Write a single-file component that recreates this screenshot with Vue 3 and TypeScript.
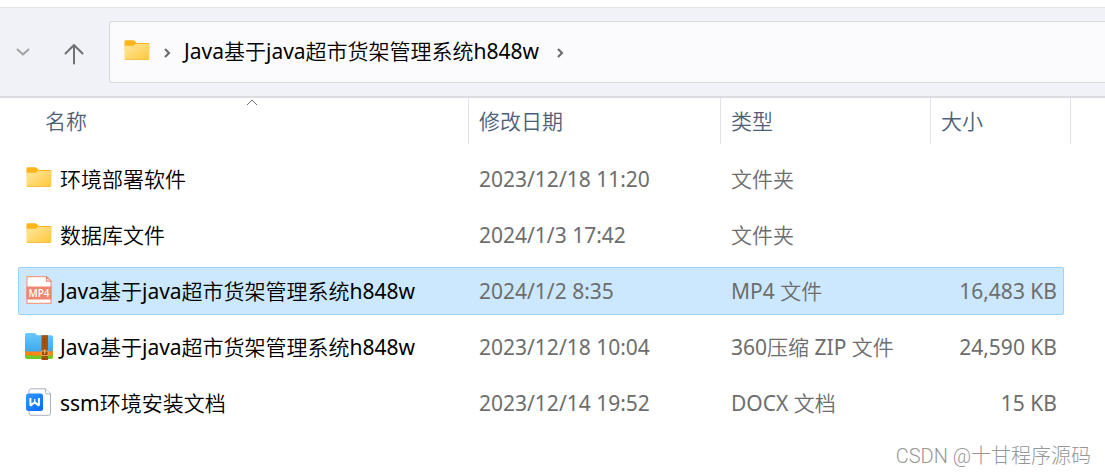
<script setup lang="ts">
import { ref } from 'vue'

type Kind = 'folder' | 'mp4' | 'zip' | 'docx'

interface Entry {
  id: number
  kind: Kind
  name: string
  modified: string
  type: string
  size: string
}

const folderName = 'Java基于java超市货架管理系统h848w'

const columns: string[] = ['名称', '修改日期', '类型', '大小']

const entries: Entry[] = [
  { id: 1, kind: 'folder', name: '环境部署软件', modified: '2023/12/18 11:20', type: '文件夹', size: '' },
  { id: 2, kind: 'folder', name: '数据库文件', modified: '2024/1/3 17:42', type: '文件夹', size: '' },
  { id: 3, kind: 'mp4', name: folderName, modified: '2024/1/2 8:35', type: 'MP4 文件', size: '16,483 KB' },
  { id: 4, kind: 'zip', name: folderName, modified: '2023/12/18 10:04', type: '360压缩 ZIP 文件', size: '24,590 KB' },
  { id: 5, kind: 'docx', name: 'ssm环境安装文档', modified: '2023/12/14 19:52', type: 'DOCX 文档', size: '15 KB' },
]

const selected = ref<number>(3)
</script>

<template>
  <div class="explorer">
    <svg class="defs" width="0" height="0" aria-hidden="true">
      <defs>
        <linearGradient id="folderFront" x1="0" y1="0" x2="1" y2="1">
          <stop offset="0" stop-color="#ffe7a0" />
          <stop offset="1" stop-color="#ffc83a" />
        </linearGradient>
        <linearGradient id="zipBlue" x1="0" y1="0" x2="0" y2="1">
          <stop offset="0" stop-color="#6bc7fb" />
          <stop offset="1" stop-color="#3fa9f0" />
        </linearGradient>
        <linearGradient id="docBlue" x1="0" y1="0" x2="1" y2="1">
          <stop offset="0" stop-color="#2f9bff" />
          <stop offset="1" stop-color="#0a66ff" />
        </linearGradient>
        <symbol id="icon-folder" viewBox="0 0 28 28">
          <path d="M1.500 5.500a1.300 1.300 0 0 1 1.300-1.300h7.600c.5 0 .9.200 1.200.5L13.700 7h11.300a1.300 1.300 0 0 1 1.300 1.300V14H1.500z" fill="#fbb41a" />
          <path d="M1.500 9.800h8.600c.5 0 .9-.2 1.200-.5l1-1c.3-.3.600-.4 1-.4H25a1.300 1.300 0 0 1 1.300 1.300v13.500A1.300 1.300 0 0 1 25 24H2.800a1.300 1.300 0 0 1-1.300-1.300z" fill="url(#folderFront)" />
          <path d="M1.700 23.200q.4.800 1.100.8H25q.8 0 1.100-.8z" fill="#f6b93b" />
        </symbol>
      </defs>
    </svg>

    <header class="toolbar">
      <button class="nav recent" type="button" aria-label="最近浏览的位置">
        <svg width="14" height="8" viewBox="0 0 14 8" fill="none" stroke="#a0a1a5" stroke-width="2">
          <path d="M1 1l6 5.500L13 1" />
        </svg>
      </button>
      <button class="nav up" type="button" aria-label="上移">
        <svg width="20" height="22" viewBox="0 0 20 22" fill="none" stroke="#707174" stroke-width="2" stroke-linecap="round" stroke-linejoin="round">
          <path d="M10 20.500V2M1.500 10.500L10 2l8.500 8.500" />
        </svg>
      </button>
      <nav class="address" aria-label="地址栏">
        <svg class="icon" aria-hidden="true"><use href="#icon-folder" /></svg>
        <svg class="chevron" viewBox="0 0 8 10" aria-hidden="true"><path d="M2 1l4 4-4 4" /></svg>
        <a class="crumb" href="#">{{ folderName }}</a>
        <svg class="chevron" viewBox="0 0 8 10" aria-hidden="true"><path d="M2 1l4 4-4 4" /></svg>
      </nav>
    </header>

    <main>
      <table>
        <thead>
          <tr>
            <th v-for="(column, i) in columns" :key="column" scope="col">
              <svg v-if="i === 0" class="sort" viewBox="0 0 12 7" aria-hidden="true"><path d="M1 6l5-5 5 5" /></svg>
              <button type="button">{{ column }}</button>
            </th>
          </tr>
        </thead>
        <tbody>
          <tr v-for="entry in entries" :key="entry.id" :class="{ selected: entry.id === selected }" @click="selected = entry.id">
            <td class="name">
              <svg v-if="entry.kind === 'folder'" class="icon folder" aria-hidden="true"><use href="#icon-folder" /></svg>
              <svg v-else-if="entry.kind === 'mp4'" class="icon" viewBox="0 0 28 28" aria-hidden="true">
                <path d="M2 .7h19.500L26 5.200v22.100H2z" fill="#fff" stroke="#f29c8a" stroke-width="1.200" />
                <path d="M21.500.7v4.500H26z" fill="#fff" stroke="#f08975" stroke-width="1.200" />
                <path d="M1.400 10.500h25.200v13H1.400z" fill="#f08571" />
                <text class="badge" x="14" y="20.500" text-anchor="middle">MP4</text>
              </svg>
              <svg v-else-if="entry.kind === 'zip'" class="icon" viewBox="0 0 28 28" aria-hidden="true">
                <path d="M0 20h28v4.500q0 2.500-2.500 2.500h-23Q0 27 0 24.500z" fill="#72c729" />
                <path d="M0 17h28v4q0 2.500-2.500 2.500h-23Q0 23.500 0 21z" fill="#ff8517" />
                <path d="M0 3Q0 1 2 1h7q1 0 1.700.8L12 3.200h14q2 0 2 2v12.300q0 2-2 2H2q-2 0-2-2z" fill="url(#zipBlue)" />
                <path d="M16.500 3.200h6.500V28h-6.500z" fill="#a95109" />
                <path d="M19 7h1v1h-1zM19 10h1v1h-1zM19 13h1v1h-1zM19 26h1v1h-1z" fill="#6c310b" />
                <path d="M16.500 19h6.500v4.500h-6.500z" fill="#9a4708" stroke="#eebd79" stroke-width=".8" />
                <path d="M19.700 17.500v4.500" fill="none" stroke="#f7cf8c" />
              </svg>
              <svg v-else class="icon" viewBox="0 0 28 28" aria-hidden="true">
                <path d="M6 .8h14.500L25.500 5.800v19.500q0 2-2 2H6q-2 0-2-2V2.800q0-2 2-2z" fill="#fdfeff" stroke="#aab0be" />
                <path d="M20.500.8v3.500q0 1.500 1.500 1.500h3.500" fill="#fff" stroke="#aab0be" />
                <rect x="1" y="5.500" width="17" height="17.500" rx="2.500" fill="url(#docBlue)" />
                <path d="M5.400 10v7.600l4.300-3.400 4.200 3.400V10" fill="none" stroke="#fff" stroke-width="2" stroke-linejoin="bevel" />
                <path d="M9.700 11v3.500" stroke="#fff" stroke-width="1.300" />
              </svg>
              <span>{{ entry.name }}</span>
            </td>
            <td>{{ entry.modified }}</td>
            <td>{{ entry.type }}</td>
            <td class="size">{{ entry.size }}</td>
          </tr>
        </tbody>
      </table>
    </main>

    <p class="watermark">CSDN @十甘程序源码</p>
  </div>
</template>

<style>
body {
  margin: 0;
  background: #fff;
}
</style>

<style scoped>
.explorer {
  position: relative;
  min-height: 100vh;
  box-sizing: border-box;
  padding-top: 7px;
  overflow: hidden;
  font-family: "Noto Sans", "Noto Sans CJK SC DemiLight", "Noto Sans CJK SC Light", "Noto Sans CJK SC", sans-serif;
  font-size: 21px;
  line-height: 30px;
  color: #000;
}

.defs {
  position: absolute;
}

button {
  padding: 0;
  border: 0;
  background: none;
  font: inherit;
  color: inherit;
}

.toolbar {
  display: flex;
  align-items: center;
  padding: 13px 0 13px 16px;
  border-top: 1px solid #e4e4e8;
  border-bottom: 2px solid #dbdbe0;
  background: #f1f2f8;
}

.nav {
  display: flex;
  flex: none;
}

.up {
  margin: 4px 25px 0 34px;
}

.address {
  display: flex;
  flex: 1;
  align-items: center;
  height: 60px;
  min-width: 0;
  padding-left: 13px;
  border: 1px solid #d7d8dd;
  border-right: 0;
  border-radius: 4px 0 0 4px;
  background: #fbfbfd;
}

.icon {
  flex: none;
  width: 28px;
  height: 28px;
}

.address .icon {
  margin-bottom: 4px;
}

.chevron {
  flex: none;
  width: 8px;
  height: 10px;
  margin: 2px 12px 0;
  fill: none;
  stroke: #66676a;
  stroke-width: 2;
}

.crumb {
  padding: 0 5px 2px 1px;
  color: inherit;
  text-decoration: none;
  white-space: nowrap;
}

main {
  padding: 0 41px 0 18px;
}

table,
thead,
tbody {
  display: block;
}

tr {
  display: grid;
  box-sizing: border-box;
}

thead tr {
  grid-template-columns: minmax(0, 1fr) 252px 210px 141px;
  height: 46px;
  margin-right: -7px;
}

th {
  position: relative;
  display: flex;
  align-items: center;
  padding: 0 0 0 10px;
  border-left: 1px solid #e2e2e4;
  font-weight: 400;
  color: #4c607a;
}

th:first-child {
  padding-left: 27px;
  border-left: 0;
}

th:last-child {
  border-right: 1px solid #e2e2e4;
}

.sort {
  position: absolute;
  top: 1px;
  left: calc(50% + 3px);
  width: 12px;
  height: 7px;
  fill: none;
  stroke: #707173;
}

tbody {
  display: grid;
  gap: 8px;
  padding-top: 11px;
}

tbody tr {
  grid-template-columns: minmax(0, 1fr) 252px 210px 133px;
  height: 48px;
  border: 1px solid transparent;
  border-radius: 2px;
}

tbody tr.selected {
  border-color: #99d1ff;
  background: #cce8ff;
}

td {
  display: flex;
  align-items: center;
  padding: 0 6px 0 11px;
  white-space: nowrap;
  color: #6d6d6d;
}

.name {
  gap: 7px;
  padding-left: 6px;
  color: #000;
}

.name .icon {
  margin-bottom: 2px;
}

.name .folder {
  margin-bottom: 4px;
}

.size {
  justify-content: flex-end;
}

.badge {
  font: 600 10px "Open Sans", sans-serif;
  fill: #fff;
}

.watermark {
  position: absolute;
  right: 14px;
  bottom: 4px;
  margin: 0;
  font-family: Roboto, "Noto Sans CJK SC", sans-serif;
  font-size: 20px;
  font-weight: 300;
  color: #979797;
}
</style>
